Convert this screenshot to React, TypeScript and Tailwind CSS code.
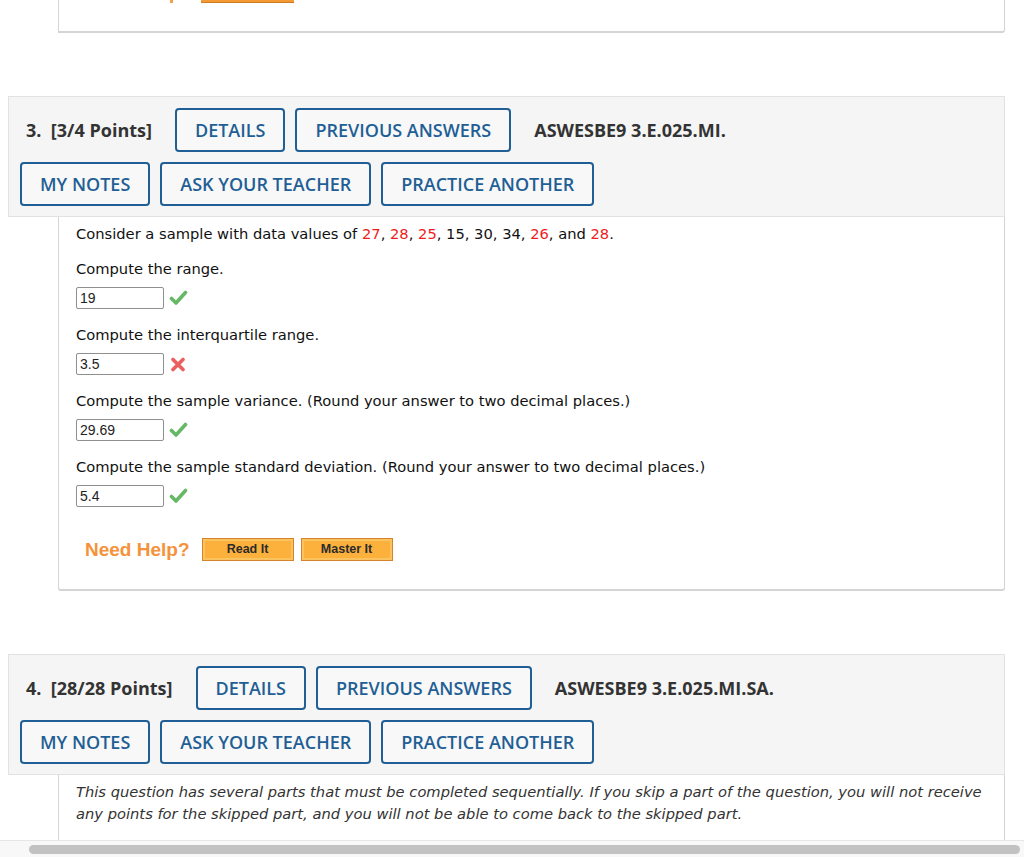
import React from "react";

const hdrFont = { fontFamily: '"Open Sans", "Liberation Sans", sans-serif' };

function ActionButton({ label }: { label: string }) {
  return (
    <button className="h-[44px] px-[18px] border-2 border-[#1f5f95] rounded-[4px] bg-[#f8f8f8] text-[#1f5f95] text-[18px] font-semibold leading-none whitespace-nowrap">
      {label}
    </button>
  );
}

function QuestionHeader({ num, points, code }: { num: string; points: string; code: string }) {
  return (
    <div className="ml-2 w-[997px] bg-[#f5f5f5] border border-[#e2e2e2] pl-[11px] pt-[11px] pb-[10px]" style={hdrFont}>
      <div className="flex items-center h-[44px]">
        <span className="ml-[6px] mr-[23px] text-[18px] font-bold text-[#333] whitespace-nowrap">
          {num}&nbsp;&nbsp;{points}
        </span>
        <div className="flex gap-[10px]">
          <ActionButton label="DETAILS" />
          <ActionButton label="PREVIOUS ANSWERS" />
        </div>
        <span className="ml-[23px] text-[18px] font-bold text-[#333] whitespace-nowrap">{code}</span>
      </div>
      <div className="flex gap-[10px] mt-[10px]">
        <ActionButton label="MY NOTES" />
        <ActionButton label="ASK YOUR TEACHER" />
        <ActionButton label="PRACTICE ANOTHER" />
      </div>
    </div>
  );
}

function Check() {
  return (
    <svg width="19" height="16" viewBox="0 0 19 16" className="ml-[5px]">
      <path d="M2.5 8.5 L7 13 L16.5 2.5" fill="none" stroke="#66b866" strokeWidth="3.6" strokeLinecap="round" strokeLinejoin="round" />
    </svg>
  );
}

function Cross() {
  return (
    <svg width="16" height="15" viewBox="0 0 16 15" className="ml-[6px]">
      <path d="M3 2.5 L13 12.5 M13 2.5 L3 12.5" fill="none" stroke="#ec5f5f" strokeWidth="3.6" strokeLinecap="round" />
    </svg>
  );
}

function AnswerBox({ value, ok }: { value: string; ok: boolean }) {
  return (
    <div className="flex items-center mt-[8px]">
      <div
        className="w-[88px] h-[22px] border border-[#8f8f8f] rounded-[2px] bg-white pl-[3px] text-[14px] leading-[20px] text-[#222]"
        style={{ fontFamily: '"Liberation Sans", Arial, sans-serif' }}
      >
        {value}
      </div>
      {ok ? <Check /> : <Cross />}
    </div>
  );
}

const red = "text-[#ee1c1c]";

function OrangeBtn({ label }: { label: string }) {
  return (
    <button className="w-[92px] h-[23px] border border-[#d7832c] bg-[#fdb13d] shadow-[inset_0_0_0_2px_#fbc35f] text-[12.5px] font-bold text-[#2b2b2b] leading-none">
      {label}
    </button>
  );
}

export default function App() {
  const body = { fontFamily: '"DejaVu Sans", Verdana, sans-serif' };
  return (
    <div className="w-[1024px] h-[857px] flex flex-col overflow-hidden bg-white">
      <div className="flex-1 overflow-hidden">
        {/* tail of previous question */}
        <div className="ml-[58px] w-[947px] h-[33px] border-l border-r border-b-2 border-[#d4d4d4] rounded-br-[3px] flex">
          <div className="ml-[111px] w-[3px] h-[3px] bg-[#f6a04a]" />
          <div className="ml-[28px] w-[93px] h-[3px] bg-[#f39a35] border-b border-[#d07a24]" />
        </div>

        <div className="h-[63px]" />

        <QuestionHeader num="3." points="[3/4 Points]" code="ASWESBE9 3.E.025.MI." />

        <div className="ml-[58px] w-[947px] border-l border-r border-b-2 border-[#d4d4d4] rounded-b-[3px] pl-[17px] pt-[7px] pb-[28px] text-[14.7px] leading-[20px] text-[#111]" style={body}>
          <p>
            Consider a sample with data values of <span className={red}>27</span>, <span className={red}>28</span>,{" "}
            <span className={red}>25</span>, 15, 30, 34, <span className={red}>26</span>, and <span className={red}>28</span>.
          </p>

          <p className="mt-[15px]">Compute the range.</p>
          <AnswerBox value="19" ok />

          <p className="mt-[16px]">Compute the interquartile range.</p>
          <AnswerBox value="3.5" ok={false} />

          <p className="mt-[16px]">Compute the sample variance. (Round your answer to two decimal places.)</p>
          <AnswerBox value="29.69" ok />

          <p className="mt-[16px]">Compute the sample standard deviation. (Round your answer to two decimal places.)</p>
          <AnswerBox value="5.4" ok />

          <div className="flex items-center mt-[31px] ml-[9px]" style={{ fontFamily: '"Liberation Sans", Arial, sans-serif' }}>
            <span className="text-[19px] font-bold text-[#f5923a] mr-[12px] leading-none">Need Help?</span>
            <div className="flex gap-[7px]">
              <OrangeBtn label="Read It" />
              <OrangeBtn label="Master It" />
            </div>
          </div>
        </div>

        <div className="h-[63px]" />

        <QuestionHeader num="4." points="[28/28 Points]" code="ASWESBE9 3.E.025.MI.SA." />

        <div className="ml-[58px] w-[947px] h-[80px] border-l border-r border-[#d4d4d4] pl-[17px] pt-[6px] text-[14.7px] leading-[22px] italic text-[#333]" style={body}>
          <p>
            This question has several parts that must be completed sequentially. If you skip a part of the question, you will not receive
            any points for the skipped part, and you will not be able to come back to the skipped part.
          </p>
        </div>
      </div>

      {/* horizontal scrollbar */}
      <div className="h-[17px] shrink-0 bg-[#f8f8f8] border-t border-[#e6e6e6] pl-[29px] pr-[4px] pt-[4px]">
        <div className="h-[9px] rounded-full bg-[#c2c2c2]" />
      </div>
    </div>
  );
}
